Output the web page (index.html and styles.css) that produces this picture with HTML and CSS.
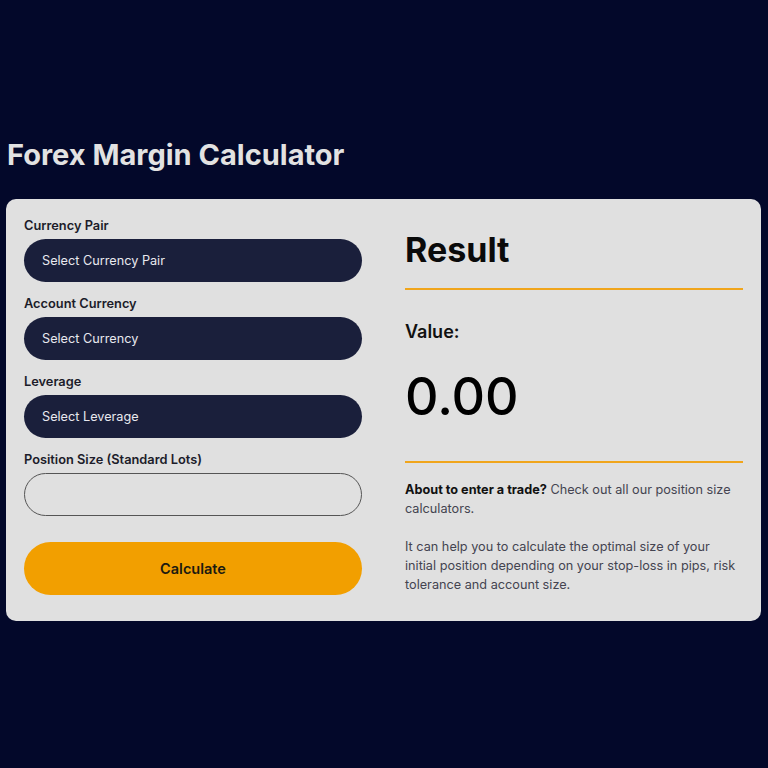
FILE: index.html
```html
<!DOCTYPE html>
<html lang="en">
<head>
<meta charset="utf-8">
<title>Forex Margin Calculator</title>
<link rel="stylesheet" href="styles.css">
</head>
<body>
<main class="page">
  <h1 class="title">Forex Margin Calculator</h1>
  <section class="card">
    <form class="form">
      <div class="field">
        <label class="label">Currency Pair</label>
        <div class="select">Select Currency Pair</div>
      </div>
      <div class="field">
        <label class="label">Account Currency</label>
        <div class="select">Select Currency</div>
      </div>
      <div class="field">
        <label class="label">Leverage</label>
        <div class="select">Select Leverage</div>
      </div>
      <div class="field">
        <label class="label">Position Size (Standard Lots)</label>
        <div class="input"></div>
      </div>
      <button type="button" class="btn">Calculate</button>
    </form>
    <div class="result">
      <h2 class="result-title">Result</h2>
      <div class="rule"></div>
      <div class="value-label">Value:</div>
      <div class="value">0.00</div>
      <div class="rule rule-2"></div>
      <p class="text"><strong>About to enter a trade?</strong> Check out all our position size calculators.</p>
      <p class="text">It can help you to calculate the optimal size of your initial position depending on your stop-loss in pips, risk tolerance and account size.</p>
    </div>
  </section>
</main>
</body>
</html>
```
FILE: styles.css
```css
html, body {
  margin: 0;
  padding: 0;
  background: #03082a;
  font-family: Inter, "Noto Sans", sans-serif;
}
.page {
  padding: 139px 7px 0 6px;
}
.title {
  margin: 0 0 0 1px;
  font-size: 29px;
  line-height: 32px;
  font-weight: 700;
  color: #e2e2e2;
}
.card {
  margin-top: 28px;
  background: #e0e0e0;
  border-radius: 10px;
  padding: 19px 18px 26px;
  display: grid;
  grid-template-columns: 1fr 1fr;
  column-gap: 43px;
}
.form {
  display: flex;
  flex-direction: column;
}
.field {
  display: flex;
  flex-direction: column;
  margin-bottom: 14px;
}
.label {
  font-size: 12.8px;
  line-height: 16px;
  font-weight: 600;
  color: #1c1c2a;
  margin-bottom: 5px;
}
.select {
  height: 43px;
  border-radius: 22px;
  background: #1a1f3b;
  color: #e8e8ee;
  font-size: 12.7px;
  display: flex;
  align-items: center;
  padding-left: 18px;
  padding-bottom: 1px;
  box-sizing: border-box;
}
.input {
  height: 41px;
  border-radius: 22px;
  border: 1px solid #555;
}
.btn {
  margin-top: 12px;
  height: 53px;
  border: none;
  border-radius: 27px;
  background: #f29f00;
  font-family: inherit;
  font-size: 14.5px;
  font-weight: 600;
  color: #1c1a10;
}
.result {
  display: flex;
  flex-direction: column;
}
.result-title {
  margin: 12px 0 0;
  font-size: 34px;
  line-height: 40px;
  font-weight: 700;
  color: #0a0a0a;
}
.rule {
  height: 2px;
  background: #f0a51c;
  margin-top: 18px;
}
.rule-2 {
  margin-top: 36px;
}
.value-label {
  margin-top: 30px;
  font-size: 18px;
  line-height: 24px;
  font-weight: 600;
  color: #111;
}
.value {
  margin-top: 25px;
  font-size: 52px;
  line-height: 56px;
  font-weight: 500;
  color: #000;
}
.text {
  margin: 17px 0 0;
  font-size: 12.7px;
  line-height: 19px;
  color: #444450;
}
.text + .text {
  margin-top: 19px;
}
.text strong {
  color: #111;
  font-weight: 700;
}
```
